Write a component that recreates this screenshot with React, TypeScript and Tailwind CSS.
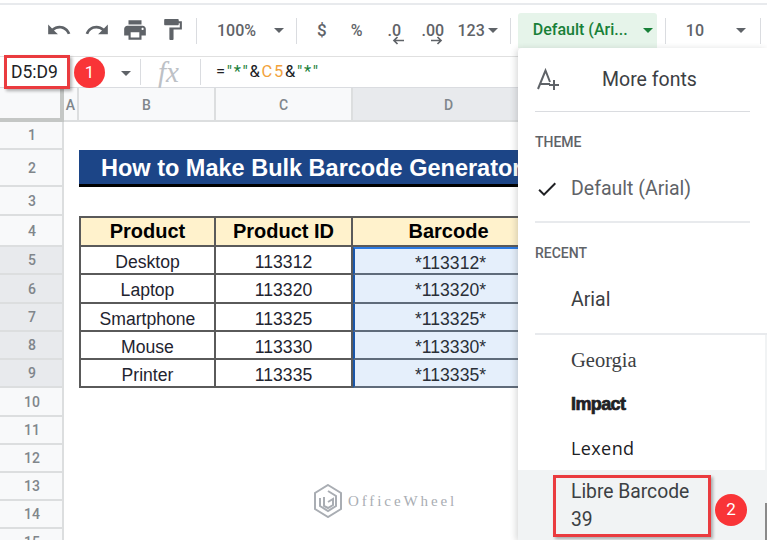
import React from "react";
import { MdUndo, MdRedo, MdPrint, MdFormatPaint, MdCheck } from "react-icons/md";

const roboto = "font-['Roboto',sans-serif]";
const arial = "font-['Liberation_Sans',Arial,sans-serif]";

function Caret({ className = "" }: { className?: string }) {
  return <span className={`inline-block w-0 h-0 border-l-[5px] border-r-[5px] border-t-[5px] border-l-transparent border-r-transparent border-t-[#5f6368] ${className}`} />;
}
function Sep({ className = "" }: { className?: string }) {
  return <span className={`w-px h-[26px] bg-[#dadce0] shrink-0 ${className}`} />;
}
function Badge({ n, className }: { n: number; className: string }) {
  return (
    <span className={`absolute rounded-full bg-[#f93437] text-white flex items-center justify-center text-[17px] ${roboto} ${className}`}>{n}</span>
  );
}
function Arrow({ dir, className }: { dir: "left" | "right"; className: string }) {
  return (
    <svg width="12" height="9" viewBox="0 0 12 9" className={`absolute ${className}`} fill="none" stroke="#5f6368" strokeWidth="1.7">
      {dir === "left" ? <path d="M12 4.5 H2 M5.5 1 L2 4.5 L5.5 8" /> : <path d="M0 4.5 H10 M6.5 1 L10 4.5 L6.5 8" />}
    </svg>
  );
}

const rowHeights = [28, 37, 29, 31, 28, 29, 28, 28, 28, 29, 28, 28, 28, 28, 28];
const products = [
  ["Desktop", "113312"],
  ["Laptop", "113320"],
  ["Smartphone", "113325"],
  ["Mouse", "113330"],
  ["Printer", "113335"],
];

function RowHead({ n }: { n: number }) {
  const sel = n >= 5 && n <= 9;
  return (
    <div className={`border-r-2 border-b-2 border-[#dcdedf] flex items-center justify-center pl-[2px] pt-[1px] text-[14px] font-medium text-[#80868b] ${roboto} ${sel ? "bg-[#e8eaed]" : "bg-[#f8f9fa]"}`}>
      {n}
    </div>
  );
}

function Sheet() {
  const rows = rowHeights.map((_, i) => i + 1);
  return (
    <div
      className="grid grid-cols-[64px_15px_137px_137px_1fr] bg-white overflow-hidden h-[418px]"
      style={{ gridTemplateRows: rowHeights.map((h) => `${h}px`).join(" ") }}
    >
      {rows.map((n) => {
        const r = n;
        return (
          <React.Fragment key={n}>
            <RowHead n={n} />
            {r === 2 ? (
              <>
                <div />
                <div className={`col-span-3 bg-[#1c4587] border-b-[3px] border-black flex items-center pl-[22px] pt-[4px] whitespace-nowrap text-white font-bold text-[23.5px] overflow-hidden ${arial}`}>
                  How to Make Bulk Barcode Generator
                </div>
              </>
            ) : r === 4 ? (
              <>
                <div />
                {["Product", "Product ID", "Barcode"].map((t, i) => (
                  <div key={t} className={`bg-[#fff2cc] border-t-2 border-[#5a5a5a] ${i === 0 ? "border-l-2" : ""} ${i === 2 ? "" : "border-r-2"} border-b-2 flex items-center text-black font-bold text-[20px] pb-[2px] ${i === 2 ? "justify-start" : "justify-center"} ${arial}`}>
                    {i === 2 ? <span className="w-[191px] text-center">{t}</span> : t}
                  </div>
                ))}
              </>
            ) : r >= 5 && r <= 9 ? (
              <>
                <div />
                <div className={`border-l-2 border-r-2 border-b-2 border-[#5a5a5a] flex items-center justify-center pt-[4px] text-[17.6px] text-[#1f2430] ${arial}`}>{products[r - 5][0]}</div>
                <div className={`border-r-2 border-b-2 border-[#5a5a5a] flex items-center justify-center pt-[4px] text-[17.6px] text-[#1f2430] ${arial}`}>{products[r - 5][1]}</div>
                <div className={`bg-[#e5effb] border-l-2 border-l-[#1a56a8] border-b-2 border-b-[#5f6b7a] flex items-center justify-start pt-[4px] text-[17.6px] text-[#2a2f38] ${r === 5 ? "border-t-2 border-t-[#2b7be4] border-b-[#1a56a8]" : ""} ${r === 9 ? "border-b-[#1a56a8]" : ""} ${arial}`}>
                  <span className="w-[191px] text-center">*{products[r - 5][1]}*</span>
                </div>
              </>
            ) : (
              <div className="col-span-4" />
            )}
          </React.Fragment>
        );
      })}
    </div>
  );
}

function ColHeader() {
  const cell = `border-r-2 border-[#dcdedf] border-b-2 flex items-center pt-[2px] text-[14px] font-medium text-[#80868b] ${roboto}`;
  return (
    <div className="grid grid-cols-[64px_15px_137px_137px_1fr] h-[34px] bg-[#f8f9fa]">
      <div className="border-r-4 border-b-4 border-[#c4c7c5]" />
      <div className={`${cell} justify-center`}>A</div>
      <div className={`${cell} justify-center`}>B</div>
      <div className={`${cell} justify-center`}>C</div>
      <div className={`${cell} justify-start bg-[#e8eaed]`}>
        <span className="w-[191px] text-center">D</span>
      </div>
    </div>
  );
}

function Toolbar() {
  return (
    <div className={`h-[53px] mt-[3px] border-t-2 border-[#e8eaed] flex items-center text-[#5f6368] ${roboto}`}>
      <div className="flex items-center gap-[12px] pl-[46px] mt-[-2px]">
        <MdUndo className="w-[26px] h-[26px]" />
        <MdRedo className="w-[26px] h-[26px]" />
        <MdPrint className="w-[26px] h-[26px]" />
        <MdFormatPaint className="w-[25px] h-[25px]" />
      </div>
      <Sep className="ml-[11px]" />
      <span className="ml-[20px] pt-[1px] text-[16px] font-medium text-[#5f6368]">100%</span>
      <Caret className="ml-[18px]" />
      <Sep className="ml-[12px]" />
      <span className="ml-[20px] text-[17px] font-medium">$</span>
      <span className="ml-[24px] text-[16px] font-medium">%</span>
      <span className="relative ml-[25px] w-[20px] text-[16px] font-medium">
        .0
        <Arrow dir="left" className="left-[4px] top-[17px]" />
      </span>
      <span className="relative ml-[14px] w-[26px] text-[16px] font-medium">
        .00
        <Arrow dir="right" className="left-[9px] top-[17px]" />
      </span>
      <span className="ml-[10px] text-[16px] font-medium">123</span>
      <Caret className="ml-[3px]" />
      <Sep className="ml-[12px]" />
      <div className="ml-[7px] w-[139px] h-[35px] mt-[-1px] bg-[#e6f4ea] rounded-t-[3px] flex items-center pl-[15px] text-[16px] font-medium text-[#188038] shrink-0">
        Default (Ari...
        <Caret className="ml-[15px] border-t-[#188038]" />
      </div>
      <Sep className="ml-[8px]" />
      <span className="ml-[20px] text-[16px] font-medium">10</span>
      <Caret className="ml-[32px]" />
      <Sep className="ml-[14px]" />
    </div>
  );
}

function FormulaBar() {
  return (
    <div className={`relative h-[32px] border-t border-[#e0e0e0] border-b border-b-[#dadce0] flex items-center ${roboto}`}>
      <span className="absolute left-[4px] top-[-2px] w-[66px] h-[34px] border-[3px] border-[#ea3b3f] shadow-[2px_2px_3px_rgba(0,0,0,0.3)] flex items-center pl-[4px] text-[17.5px] text-[#202124]">D5:D9</span>
      <Caret className="ml-[121px] mt-[3px]" />
      <Sep className="ml-[9px] h-[24px]" />
      <span className="ml-[17px] w-[42px] text-[29px] leading-none text-[#bdc1c6] italic font-['Liberation_Serif',serif]">fx</span>
      <Sep className="h-[24px]" />
      <span className="ml-[15px] text-[16.5px] tracking-[1.7px] text-[#202124]">
        =<span className="text-[#188038]">"*"</span>&amp;<span className="text-[#f2a23c]">C5</span>&amp;<span className="text-[#188038]">"*"</span>
      </span>
    </div>
  );
}

function FontMenu() {
  const item = "flex items-center pl-[53px] h-[44px] shrink-0";
  return (
    <div className={`absolute left-[518px] top-[48px] w-[249px] h-[492px] bg-white rounded-tl-[4px] shadow-[-2px_1px_6px_rgba(60,64,67,0.2)] text-[#3c4043] flex flex-col ${roboto}`}>
      <div className="h-[63px] flex items-center shrink-0 relative">
        <svg width="24" height="24" viewBox="0 0 24 24" className="ml-[18px] text-[#5f6368]" fill="none" stroke="currentColor" strokeWidth="2">
          <path d="M2 21 L9.5 2.5 L14 14 M4.5 16 H14" />
          <path d="M18 12 V22 M13 17 H23" />
        </svg>
        <span className="ml-[42px] text-[19.5px]">More fonts</span>
      </div>
      <div className="mx-[17px] h-px bg-[#dadce0] shrink-0" />
      <div className="h-[59px] flex items-center pl-[17px] pt-[1px] text-[14px] font-medium text-[#5f6368] shrink-0">THEME</div>
      <div className="h-[35px] flex items-center shrink-0 pt-[1px]">
        <MdCheck className="ml-[17px] w-[24px] h-[24px] text-[#202124]" />
        <span className="ml-[12px] text-[19.5px] text-[#5f6368]">Default (Arial)</span>
      </div>
      <div className="mt-[15px] mx-[17px] h-[2px] bg-[#e8eaed] shrink-0" />
      <div className="h-[60px] flex items-center pl-[17px] text-[14px] font-medium text-[#5f6368] shrink-0">RECENT</div>
      <div className="flex items-center pl-[53px] h-[33px] shrink-0 text-[19.5px]">Arial</div>
      <div className="mt-[17px] ml-[17px] h-[2px] bg-[#e8eaed] shrink-0" />
      <div className="pt-[3px] border-r-2 border-[#f1f3f4] shrink-0">
        <div className={`${item} font-['Liberation_Serif',serif] text-[20.5px]`}>Georgia</div>
        <div className={`${item} ${arial} font-bold text-[18px] tracking-[-0.6px] text-[#202124] [-webkit-text-stroke:0.7px_#202124]`}>Impact</div>
        <div className={`${item} font-['Open_Sans',sans-serif] text-[18px] tracking-[0.4px] text-[#202124]`}>Lexend</div>
      </div>
      <div className="relative flex-1 bg-[#f1f3f4] pl-[53px] pt-[8px] text-[19.3px] leading-[28px]">
        Libre Barcode<br />39
        <span className="absolute right-0 top-[33px] bottom-0 w-[2px] bg-[#8a8a8a]" />
      </div>
    </div>
  );
}

export default function App() {
  return (
    <div className="relative w-[767px] h-[540px] overflow-hidden bg-white">
      <Toolbar />
      <FormulaBar />
      <ColHeader />
      <Sheet />
      <FontMenu />
      <Badge n={1} className="left-[74px] top-[57px] w-[31px] h-[31px]" />
      <span className="absolute left-[553px] top-[475px] w-[158px] h-[62px] border-[3px] border-[#ea3b3f] shadow-[2px_2px_3px_rgba(0,0,0,0.3)]" />
      <Badge n={2} className="left-[715px] top-[494px] w-[32px] h-[32px]" />
      <div className="absolute left-[313px] top-[484px] flex items-center gap-[5px] text-[#a9adb3]">
        <svg width="30" height="34" viewBox="0 0 30 34" fill="none" stroke="currentColor" strokeWidth="2">
          <path d="M15 1 L28 9 V25 L15 33 L2 25 V9 Z" />
          <path d="M15 7 L23 12 V22 L15 27 L7 22 V14" />
          <path d="M11 13 V22 L15 24 L20 21 V15 L15 18" />
        </svg>
        <span className="font-['Liberation_Serif',serif] text-[15px] tracking-[2.9px]">OfficeWheel</span>
      </div>
    </div>
  );
}
